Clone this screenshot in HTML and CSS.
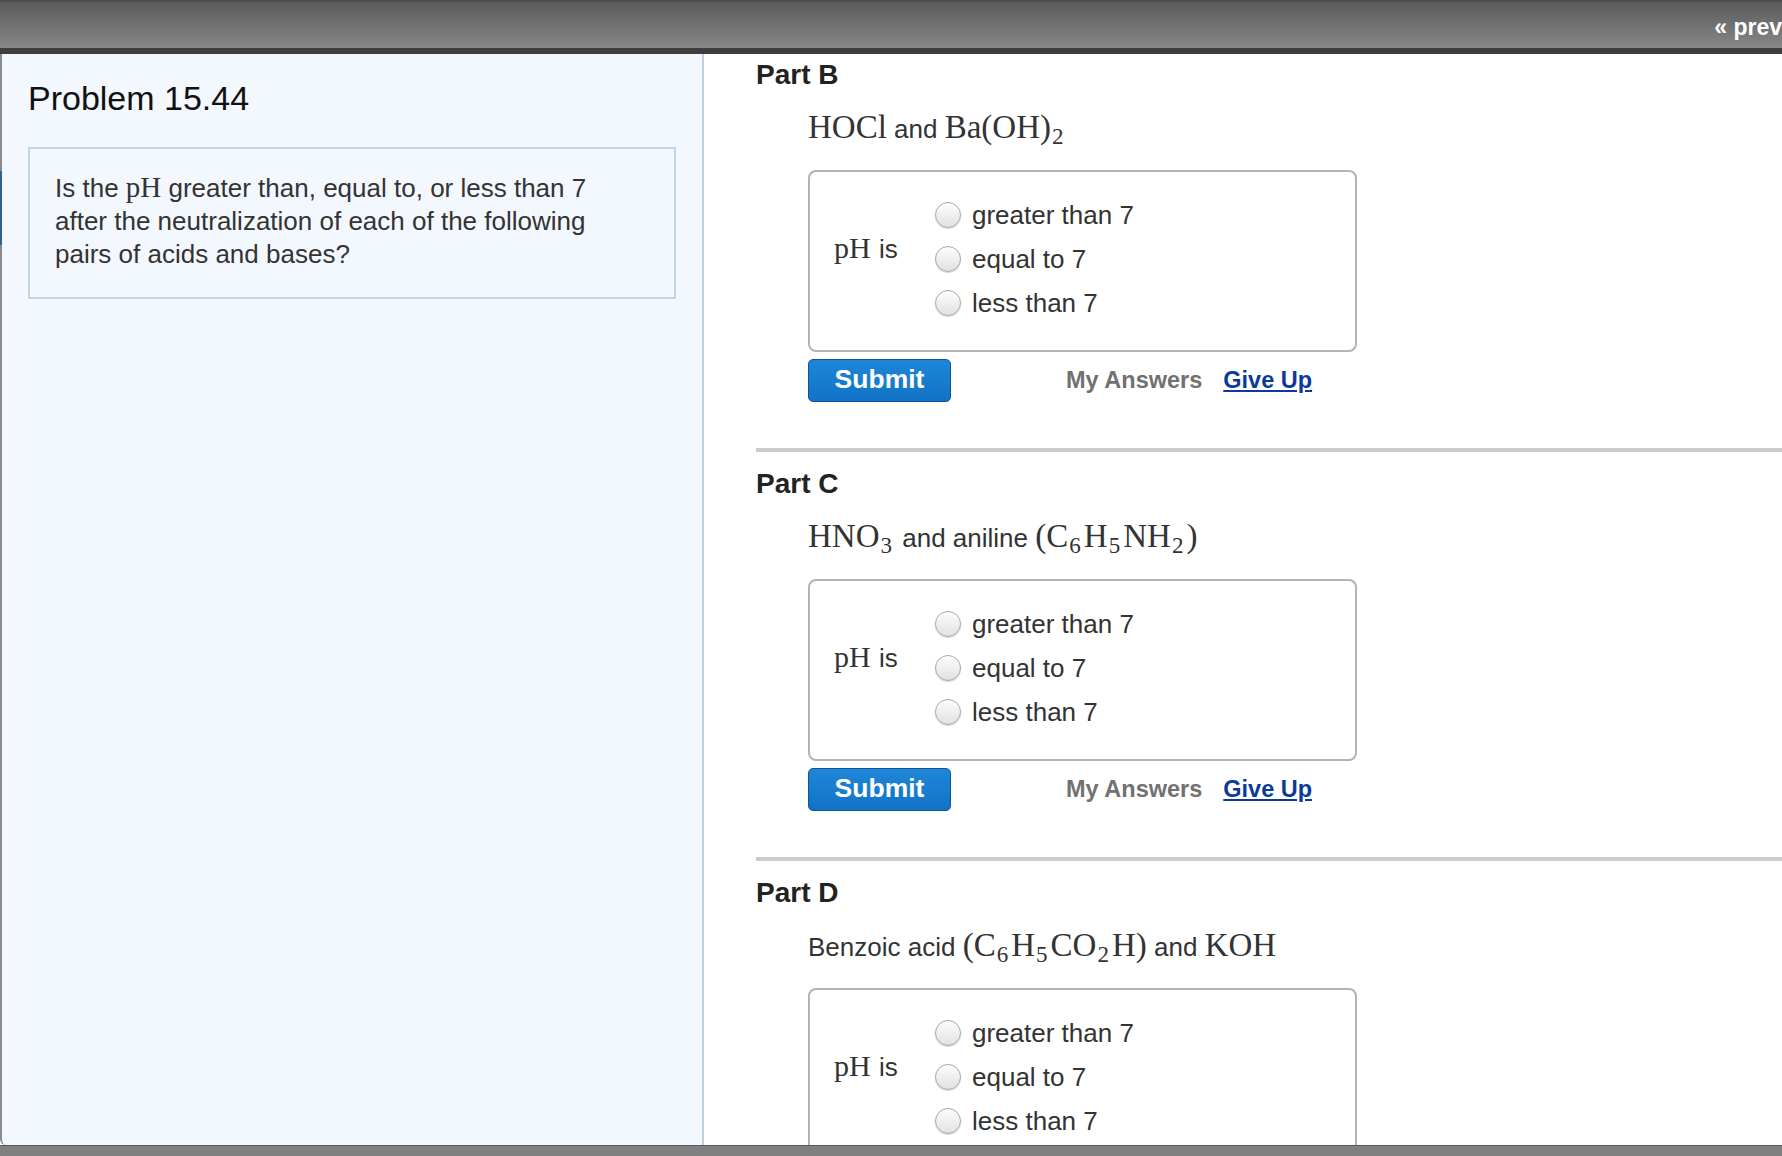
FILE: index.html
```html
<!DOCTYPE html>
<html lang="en">
<head>
    <meta charset="UTF-8">
    <meta name="viewport" content="width=device-width, initial-scale=1.0">
    <title>Problem 15.44</title>
    <link rel="stylesheet" href="styles.css">
</head>
<body>
    <div class="topbar">
        <a class="prev-link" href="#">&laquo; prev</a>
    </div>

    <div class="main">
        <div class="problem-panel">
            <h2 class="problem-title">Problem 15.44</h2>
            <div class="question-box">
                <p>Is the <span class="math">pH</span> greater than, equal to, or less than 7 after the neutralization of each of the following pairs of acids and bases?</p>
            </div>
        </div>

        <div class="parts">
            <!-- Part B -->
            <div class="part first">
                <h3>Part B</h3>
                <div class="part-body">
                    <div class="formula"><span class="math">HOCl</span> and <span class="math">Ba(OH)<sub>2</sub></span></div>
                    <div class="answer-box">
                        <div class="ph-label"><span class="math">pH</span> is</div>
                        <div class="choices">
                            <label class="choice"><span class="radio"></span>greater than 7</label>
                            <label class="choice"><span class="radio"></span>equal to 7</label>
                            <label class="choice"><span class="radio"></span>less than 7</label>
                        </div>
                    </div>
                    <div class="actions">
                        <button class="submit-btn">Submit</button>
                        <span class="my-answers">My Answers</span>
                        <a class="give-up" href="#">Give Up</a>
                    </div>
                </div>
            </div>

            <!-- Part C -->
            <div class="part">
                <h3>Part C</h3>
                <div class="part-body">
                    <div class="formula"><span class="math">HNO<sub>3</sub></span> and aniline <span class="math">(C<sub>6</sub>H<sub>5</sub>NH<sub>2</sub>)</span></div>
                    <div class="answer-box">
                        <div class="ph-label"><span class="math">pH</span> is</div>
                        <div class="choices">
                            <label class="choice"><span class="radio"></span>greater than 7</label>
                            <label class="choice"><span class="radio"></span>equal to 7</label>
                            <label class="choice"><span class="radio"></span>less than 7</label>
                        </div>
                    </div>
                    <div class="actions">
                        <button class="submit-btn">Submit</button>
                        <span class="my-answers">My Answers</span>
                        <a class="give-up" href="#">Give Up</a>
                    </div>
                </div>
            </div>

            <!-- Part D -->
            <div class="part">
                <h3>Part D</h3>
                <div class="part-body">
                    <div class="formula">Benzoic acid <span class="math">(C<sub>6</sub>H<sub>5</sub>CO<sub>2</sub>H)</span> and <span class="math">KOH</span></div>
                    <div class="answer-box">
                        <div class="ph-label"><span class="math">pH</span> is</div>
                        <div class="choices">
                            <label class="choice"><span class="radio"></span>greater than 7</label>
                            <label class="choice"><span class="radio"></span>equal to 7</label>
                            <label class="choice"><span class="radio"></span>less than 7</label>
                        </div>
                    </div>
                    <div class="actions">
                        <button class="submit-btn">Submit</button>
                        <span class="my-answers">My Answers</span>
                        <a class="give-up" href="#">Give Up</a>
                    </div>
                </div>
            </div>
        </div>
    </div>

    <div class="bottom-strip"></div>
</body>
</html>
```

FILE: styles.css
```css
* {
    margin: 0;
    padding: 0;
    box-sizing: border-box;
}

body {
    width: 1782px;
    height: 1156px;
    overflow: hidden;
    display: flex;
    flex-direction: column;
    background: #fff;
    color: #333;
    font-family: "Liberation Sans", Arial, sans-serif;
}

/* top navigation bar */
.topbar {
    height: 54px;
    flex-shrink: 0;
    display: flex;
    align-items: center;
    justify-content: flex-end;
    padding-top: 5px;
    background: linear-gradient(#5b5b5b, #878787);
    border-top: 2px solid #4c4c4c;
    border-bottom: 6px solid #3e3e3e;
}

.prev-link {
    color: #fff;
    font-size: 23px;
    font-weight: bold;
    text-decoration: none;
    white-space: nowrap;
}

.main {
    flex: 1;
    display: flex;
    overflow: hidden;
}

/* left problem column */
.problem-panel {
    position: relative;
    width: 704px;
    flex-shrink: 0;
    padding: 24px 26px 0;
    background: #f3f8fe;
    border-left: 2px solid #8a8a8a;
    border-right: 2px solid #bdd0e3;
    border-bottom-left-radius: 6px;
}

.problem-panel::before {
    content: "";
    position: absolute;
    left: -2px;
    top: 117px;
    width: 2px;
    height: 74px;
    background: #2f5f99;
}

.problem-title {
    font-size: 34px;
    font-weight: normal;
    line-height: 40px;
    color: #111;
    margin-bottom: 29px;
}

.question-box {
    border: 2px solid #c3d4e5;
    padding: 23px 50px 26px 25px;
    font-size: 26px;
    line-height: 33px;
    color: #333;
}

.question-box .math {
    font-size: 29px;
    line-height: 30px;
}

.math {
    font-family: "Liberation Serif", "Times New Roman", serif;
}

.math sub {
    font-size: 0.7em;
    vertical-align: -0.25em;
    line-height: 0;
    margin: 0 3px 0 1px;
}

/* right parts column */
.parts {
    flex: 1;
    padding-left: 52px;
    overflow: hidden;
}

.part {
    border-top: 4px solid #cbcbcb;
    padding: 16px 0 46px;
}

.part.first {
    border-top: none;
    padding-top: 5px;
}

.part h3 {
    font-size: 28px;
    font-weight: bold;
    line-height: 32px;
    color: #222;
}

.part-body {
    padding-left: 52px;
}

.formula {
    margin-top: 16px;
    font-size: 26px;
    line-height: 40px;
}

.formula .math {
    font-size: 33px;
}

.answer-box {
    width: 549px;
    margin-top: 21px;
    display: flex;
    align-items: center;
    padding: 21px 24px 25px;
    border: 2px solid #b3b3b3;
    border-radius: 8px;
}

.ph-label {
    width: 101px;
    flex-shrink: 0;
    margin-bottom: 21px;
    font-size: 26px;
    line-height: 44px;
}

.ph-label .math {
    font-size: 30px;
    margin-right: 1px;
}

.choices {
    display: flex;
    flex-direction: column;
}

.choice {
    display: flex;
    align-items: center;
    height: 44px;
    font-size: 26px;
    color: #333;
}

.radio {
    width: 26px;
    height: 26px;
    margin-right: 11px;
    border-radius: 50%;
    border: 1px solid #a5a5a5;
    background: linear-gradient(#fdfdfd, #e1e1e1);
    box-shadow: inset 0 1px 1px #fff, 0 1px 1px rgba(0, 0, 0, 0.15);
}

.actions {
    display: flex;
    align-items: center;
    margin-top: 7px;
}

.submit-btn {
    width: 143px;
    height: 43px;
    padding: 0 0 3px;
    font-family: "Liberation Sans", Arial, sans-serif;
    font-size: 26.5px;
    font-weight: bold;
    color: #fff;
    background: linear-gradient(#1f86d8, #1173c6);
    border: 1px solid #0d5597;
    border-radius: 5px;
    cursor: pointer;
}

.my-answers {
    margin-left: 115px;
    font-size: 23.5px;
    font-weight: bold;
    color: #717171;
}

.give-up {
    margin-left: 21px;
    font-size: 23.5px;
    font-weight: bold;
    color: #0b3a9a;
}

.bottom-strip {
    height: 11px;
    flex-shrink: 0;
    background: #808080;
    border-top: 1px solid #5a5a5a;
}
```
